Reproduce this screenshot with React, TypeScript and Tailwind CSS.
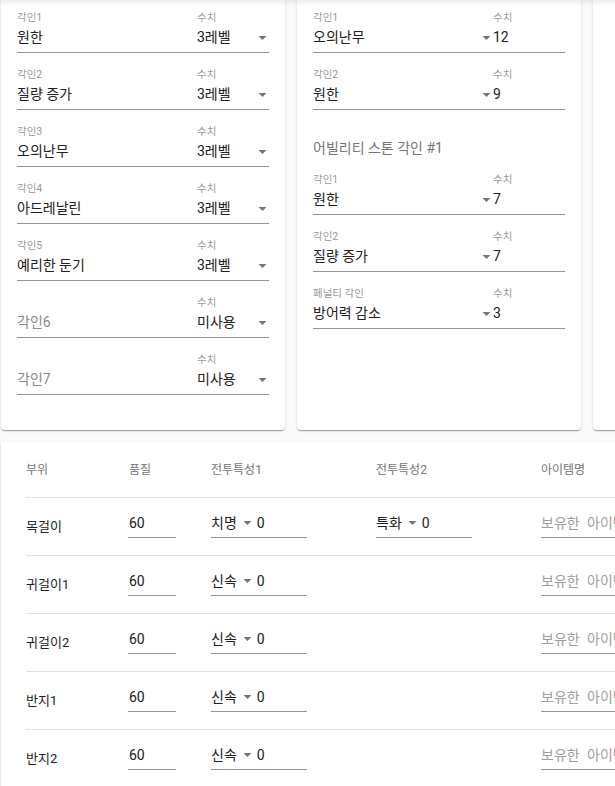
import React from 'react';

const paper =
  'bg-white shadow-[0_2px_1px_-1px_rgba(0,0,0,0.2),0_1px_1px_0_rgba(0,0,0,0.14),0_1px_3px_0_rgba(0,0,0,0.12)]';

function Arrow() {
  return (
    <svg viewBox="0 0 24 24" className="w-[19px] h-[19px] shrink-0 fill-[#757575]">
      <path d="M7 10l5 5 5-5z" />
    </svg>
  );
}

interface FieldProps {
  label?: string;
  value?: string;
  placeholder?: string;
  arrow?: boolean;
  className?: string;
}

// one text field in a card: small label, value, underline
function Field({ label, value, placeholder, arrow, className }: FieldProps) {
  return (
    <div className={'flex flex-col pt-[11px] ' + (className ?? '')}>
      <div className="h-[14px] leading-[14px] text-[10.5px] text-[#9a9a9a] whitespace-nowrap">{label}</div>
      <div className="mt-[2px] h-[26px] pb-[5px] border-b border-[#949494] flex items-center">
        {value ? (
          <span className="flex-1 text-[14px] leading-[20px] text-[#212121] whitespace-nowrap">{value}</span>
        ) : (
          <span className="flex-1 text-[14px] leading-[20px] text-[#8a8a8a] whitespace-nowrap">{placeholder}</span>
        )}
        {arrow && (
          <span className="-mr-[3px]">
            <Arrow />
          </span>
        )}
      </div>
    </div>
  );
}

const engravings = [
  { label: '각인1', value: '원한', level: '3레벨' },
  { label: '각인2', value: '질량 증가', level: '3레벨' },
  { label: '각인3', value: '오의난무', level: '3레벨' },
  { label: '각인4', value: '아드레날린', level: '3레벨' },
  { label: '각인5', value: '예리한 둔기', level: '3레벨' },
  { label: '', placeholder: '각인6', level: '미사용' },
  { label: '', placeholder: '각인7', level: '미사용' },
];

function SelectRow({ label, value, num }: { label: string; value: string; num: string }) {
  return (
    <div className="flex h-[57px]">
      <Field label={label} value={value} arrow className="flex-1" />
      <Field label="수치" value={num} className="w-[72px]" />
    </div>
  );
}

const accessories = [
  { part: '목걸이', stat1: '치명', stat2: '특화' },
  { part: '귀걸이1', stat1: '신속' },
  { part: '귀걸이2', stat1: '신속' },
  { part: '반지1', stat1: '신속' },
  { part: '반지2', stat1: '신속' },
];

function StatInput({ name }: { name: string }) {
  return (
    <div className="w-[96px] h-[25px] pb-[4px] mb-[3px] border-b border-[#949494] flex items-center text-[14px] leading-[20px] text-[#212121]">
      <span>{name}</span>
      <span className="ml-[1px]">
        <Arrow />
      </span>
      <span>0</span>
    </div>
  );
}

export default function App() {
  return (
    <div className="relative min-h-screen overflow-hidden bg-[#fafafa] font-['Roboto','Noto_Sans_CJK_KR',sans-serif]">
      <div className="w-[900px] pl-[1px]">
        <div className="flex gap-[12px] items-stretch">
          <div className={paper + ' w-[284px] rounded-b-[4px] px-4 pb-[31px]'}>
            {engravings.map((e, i) => (
              <div key={i} className="flex h-[57px]">
                <Field label={e.label} value={e.value} placeholder={e.placeholder} className="flex-1" />
                <Field label="수치" value={e.level} arrow className="w-[72px]" />
              </div>
            ))}
          </div>

          <div className={paper + ' w-[284px] rounded-b-[4px] px-4'}>
            <SelectRow label="각인1" value="오의난무" num="12" />
            <SelectRow label="각인2" value="원한" num="9" />
            <div className="h-[48px] pt-[24px] text-[14px] leading-[21px] text-[#757575]">어빌리티 스톤 각인 #1</div>
            <SelectRow label="각인1" value="원한" num="7" />
            <SelectRow label="각인2" value="질량 증가" num="7" />
            <SelectRow label="페널티 각인" value="방어력 감소" num="3" />
          </div>

          <div className={paper + ' w-[284px] rounded-b-[4px]'} />
        </div>

        <div className={paper + ' mt-[12px] pl-[25px]'}>
          <div className="flex h-[56px] items-center border-b border-[#e0e0e0] text-[12px] text-[#757575]">
            <div className="w-[102px]">부위</div>
            <div className="w-[83px] pl-[1px]">품질</div>
            <div className="w-[165px]">전투특성1</div>
            <div className="w-[165px]">전투특성2</div>
            <div className="flex-1">아이템명</div>
          </div>
          {accessories.map((a) => (
            <div key={a.part} className="flex h-[58px] items-center border-b border-[#e0e0e0]">
              <div className="w-[102px] text-[13px] text-[#212121]">{a.part}</div>
              <div className="w-[83px]">
                <div className="w-[48px] h-[25px] pb-[4px] mb-[3px] pl-[1px] border-b border-[#949494] text-[14px] leading-[20px] text-[#212121]">
                  60
                </div>
              </div>
              <div className="w-[165px]">
                <StatInput name={a.stat1} />
              </div>
              <div className="w-[165px]">{a.stat2 && <StatInput name={a.stat2} />}</div>
              <div className="flex-1">
                <div className="w-[200px] h-[25px] pb-[4px] mb-[3px] border-b border-[#949494] text-[14px] leading-[20px] text-[#9e9e9e] whitespace-nowrap [word-spacing:4px]">
                  보유한 아이템명
                </div>
              </div>
            </div>
          ))}
        </div>
      </div>
      <div className="absolute top-0 left-0 right-0 h-[6px] bg-linear-to-b from-[rgba(0,0,0,0.07)] to-transparent" />
    </div>
  );
}
